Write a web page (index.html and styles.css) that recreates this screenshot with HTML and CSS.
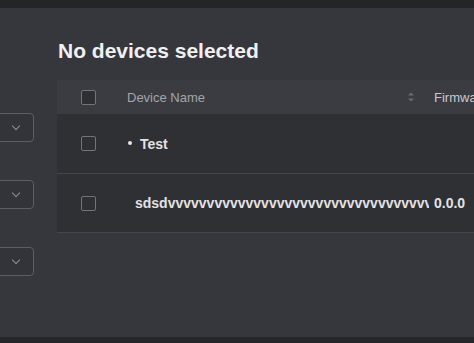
FILE: index.html
```html
<!DOCTYPE html>
<html>
<head>
    <link rel="stylesheet" href="styles.css">
</head>
<body>
    <div class="topbar"></div>
    <div class="main">
        <div class="sidebar">
            <div class="select"><span class="chev"></span></div>
            <div class="select"><span class="chev"></span></div>
            <div class="select"><span class="chev"></span></div>
        </div>
        <div class="content">
            <h1 class="title">No devices selected</h1>
            <div class="table">
                <div class="row head">
                    <div class="cell check"><span class="box"></span></div>
                    <div class="cell name">
                        <span>Device Name</span>
                        <svg class="sort" width="8" height="12" viewBox="0 0 8 12">
                            <path d="M1 4.5 L4 1.5 L7 4.5 Z" fill="#6a6b70"/>
                            <path d="M1 7.5 L4 10.5 L7 7.5 Z" fill="#6a6b70"/>
                        </svg>
                    </div>
                    <div class="cell fw">Firmware Version</div>
                </div>
                <div class="row">
                    <div class="cell check"><span class="box"></span></div>
                    <div class="cell name strong"><span class="dot"></span>Test</div>
                    <div class="cell fw strong"></div>
                </div>
                <div class="row">
                    <div class="cell check"><span class="box"></span></div>
                    <div class="cell name strong indent">sdsdvvvvvvvvvvvvvvvvvvvvvvvvvvvvvvvvvvvvvvvvvvvvvvvvvvvv</div>
                    <div class="cell fw strong">0.0.0</div>
                </div>
            </div>
        </div>
    </div>
    <div class="bottombar"></div>
</body>
</html>
```

FILE: styles.css
```css
html, body {
    margin: 0;
    height: 100%;
}
body {
    background: #36373c;
    font-family: "Liberation Sans", Arial, sans-serif;
    overflow: hidden;
    display: flex;
    flex-direction: column;
}
.topbar {
    height: 8px;
    background: #242529;
}
.bottombar {
    height: 6px;
    background: #25262a;
}
.main {
    flex: 1;
    display: flex;
}
.sidebar {
    width: 57px;
    flex-shrink: 0;
    padding-top: 105px;
    display: flex;
    flex-direction: column;
    gap: 38px;
    overflow: hidden;
}
.select {
    width: 100px;
    height: 29px;
    margin-left: -66px;
    box-sizing: border-box;
    border: 1px solid #5d5e63;
    border-radius: 4px;
    background: #333439;
    position: relative;
}
.chev {
    position: absolute;
    right: 14px;
    top: 9px;
    width: 5px;
    height: 5px;
    border-right: 1.3px solid #8e8f93;
    border-bottom: 1.3px solid #8e8f93;
    transform: rotate(45deg);
}
.content {
    flex: 1;
    min-width: 0;
}
.title {
    margin: 23px 0 9px 1px;
    height: 40px;
    font-size: 21px;
    font-weight: bold;
    color: #f0f0f2;
    line-height: 40px;
}
.table {
    overflow: hidden;
}
.row {
    display: grid;
    grid-template-columns: 70px 307px 200px;
    height: 59px;
    align-items: center;
    background: #2f3034;
    border-bottom: 1px solid #45464a;
}
.row.head {
    height: 34px;
    background: #3b3c41;
    border-bottom: none;
}
.row:last-child {
    height: 58px;
}
.cell {
    white-space: nowrap;
    overflow: hidden;
}
.check {
    padding-left: 24px;
    display: flex;
}
.box {
    width: 15px;
    height: 15px;
    box-sizing: border-box;
    border: 1.5px solid #737479;
    border-radius: 2px;
}
.head .box {
    background: #2e2f33;
}
.name {
    font-size: 13px;
    color: #a4a5a9;
    display: flex;
    align-items: center;
    padding-right: 5px;
}
.name span:first-child {
    flex: 1;
}
.sort {
    margin-right: 14px;
}
.fw {
    font-size: 13px;
    color: #c8c9cc;
}
.strong {
    font-size: 14px;
    color: #e2e2e4;
    font-weight: 600;
}
.name.strong {
    display: block;
    overflow: hidden;
    padding-right: 0;
    margin-right: 5px;
}
.dot {
    display: inline-block;
    width: 4px;
    height: 4px;
    border-radius: 50%;
    background: #e6e6e8;
    margin: 0 8px 3px 1px;
    vertical-align: middle;
}
.indent {
    padding-left: 8px;
}
```
